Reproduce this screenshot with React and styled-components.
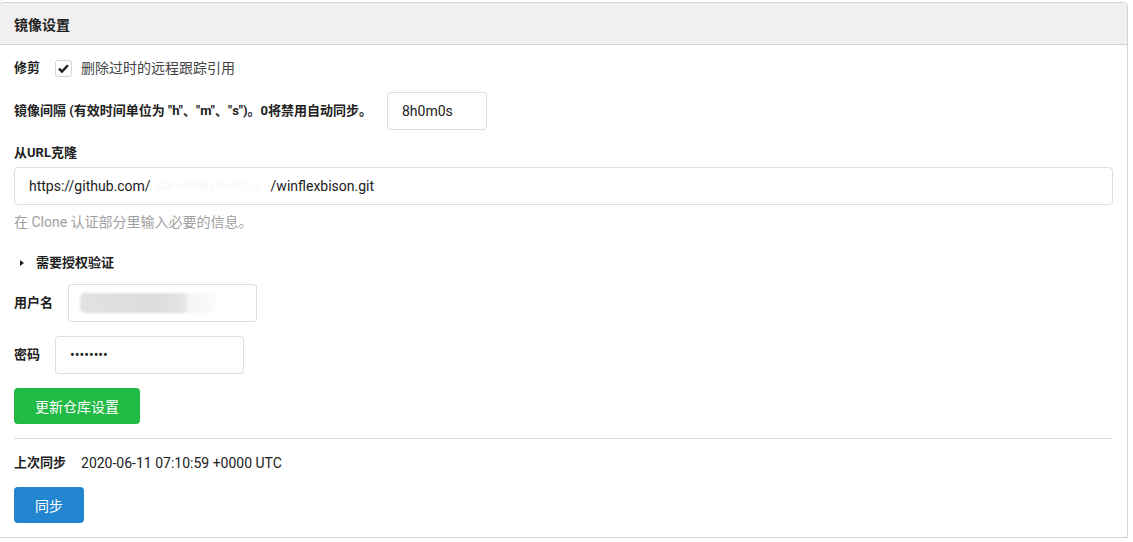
import React from 'react';
import styled, { createGlobalStyle } from 'styled-components';

const GlobalStyle = createGlobalStyle`
  body {
    margin: 0;
    background: #fff;
    font-family: Roboto, "Noto Sans CJK SC", sans-serif;
    color: #212121;
  }
`;

const Panel = styled.div`
  box-sizing: border-box;
  width: 1129px;
  margin: 2px 0 0 -1px;
  border: 1px solid #d4d4d5;
  border-radius: 4px 4px 0 0;
`;

const Header = styled.div`
  display: flex;
  align-items: center;
  height: 41px;
  padding: 0 14px;
  background: #f0f0f0;
  border-bottom: 1px solid #d4d4d5;
  border-radius: 4px 4px 0 0;
  font-size: 14px;
  font-weight: bold;
`;

const Body = styled.div`
  display: flex;
  flex-direction: column;
  align-items: flex-start;
  padding: 14px;
`;

const Field = styled.div`
  display: flex;
  align-items: center;
  gap: 15px;
  margin-top: ${p => p.$top || 0}px;
`;

const Label = styled.label`
  font-size: 13px;
  font-weight: bold;
  line-height: 16px;
  white-space: nowrap;
  margin-top: ${p => p.$top || 0}px;
`;

const Check = styled.label`
  display: flex;
  align-items: center;
  gap: 9px;
  font-size: 14px;
  line-height: 18px;
  color: #444;
`;

const Box = styled.span`
  box-sizing: border-box;
  display: inline-flex;
  align-items: center;
  justify-content: center;
  width: 17px;
  height: 17px;
  border: 1px solid #d4d4d5;
  border-radius: 3px;
  background: #fff;
`;

const Input = styled.input`
  box-sizing: border-box;
  width: ${p => p.$w || '100%'};
  height: 38px;
  padding: 0 14px;
  border: 1px solid rgba(34, 36, 38, 0.15);
  border-radius: 4px;
  font-family: Roboto, "Noto Sans CJK SC", sans-serif;
  font-size: 14px;
  color: #212121;
  background: #fff;
  outline: none;
`;

const UrlBox = styled.div`
  box-sizing: border-box;
  display: flex;
  align-items: center;
  width: 100%;
  height: 38px;
  margin-top: 6px;
  padding: 0 14px;
  border: 1px solid rgba(34, 36, 38, 0.15);
  border-radius: 4px;
  font-size: 14px;
  color: #212121;
`;

const Hidden = styled.span`
  display: inline-block;
  width: 120px;
  padding-left: 6px;
  box-sizing: border-box;
  font-size: 12px;
  color: #f7f7f7;
  white-space: nowrap;
`;

const Help = styled.div`
  margin-top: 8px;
  font-size: 14px;
  line-height: 18px;
  color: #a0a0a0;
`;

const Toggle = styled.div`
  display: flex;
  align-items: center;
  gap: 12px;
  margin-top: 24px;
  padding-left: 6px;
  font-size: 13px;
  font-weight: bold;
  line-height: 16px;
`;

const Caret = styled.span`
  width: 0;
  height: 0;
  border-top: 3.5px solid transparent;
  border-bottom: 3.5px solid transparent;
  border-left: 4px solid #212121;
`;

const Wrap = styled.div`
  position: relative;
`;

const Blur = styled.span`
  position: absolute;
  left: 12px;
  top: 9px;
  width: 136px;
  height: 20px;
  background: linear-gradient(to right, #e2e2e2, #dcdcdc 55%, #e4e4e4 76%, #f5f5f5 80%, #fafafa);
  filter: blur(1px);
  border-radius: 5px;
`;

const Button = styled.button`
  height: 36px;
  margin-top: ${p => p.$top || 14}px;
  padding: 0 21px;
  border: none;
  border-radius: 4px;
  background: ${p => p.$color};
  color: #fff;
  font-family: Roboto, "Noto Sans CJK SC", sans-serif;
  font-size: 14px;
  cursor: pointer;
`;

const Divider = styled.hr`
  width: 100%;
  margin: 14px 0 0;
  border: none;
  border-top: 1px solid #ddd;
`;

const Value = styled.span`
  font-size: 14px;
  line-height: 16px;
`;

export default function App() {
  return (
    <>
      <GlobalStyle />
      <Panel>
        <Header>镜像设置</Header>
        <Body>
          <Field>
            <Label>修剪</Label>
            <Check>
              <Box>
                <svg width="11" height="9" viewBox="0 0 11 9">
                  <path d="M1 4.6 L4 7.6 L10 1.2" fill="none" stroke="#212121" strokeWidth="2.4" />
                </svg>
              </Box>
              删除过时的远程跟踪引用
            </Check>
          </Field>
          <Field $top={15}>
            <Label>镜像间隔 (有效时间单位为 "h"、"m"、"s")。0将禁用自动同步。</Label>
            <Input $w="100px" defaultValue="8h0m0s" />
          </Field>
          <Label $top={15}>从URL克隆</Label>
          <UrlBox>
            https://github.com/<Hidden>GameBabyRockSun</Hidden>/winflexbison.git
          </UrlBox>
          <Help>在 Clone 认证部分里输入必要的信息。</Help>
          <Toggle>
            <Caret />
            需要授权验证
          </Toggle>
          <Field $top={13}>
            <Label>用户名</Label>
            <Wrap>
              <Input $w="189px" />
              <Blur />
            </Wrap>
          </Field>
          <Field $top={14}>
            <Label>密码</Label>
            <Input $w="189px" type="password" defaultValue="12345678" />
          </Field>
          <Button $color="#21ba45">更新仓库设置</Button>
          <Divider />
          <Field $top={16}>
            <Label>上次同步</Label>
            <Value>2020-06-11 07:10:59 +0000 UTC</Value>
          </Field>
          <Button $color="#2185d0" $top={16}>同步</Button>
        </Body>
      </Panel>
    </>
  );
}
